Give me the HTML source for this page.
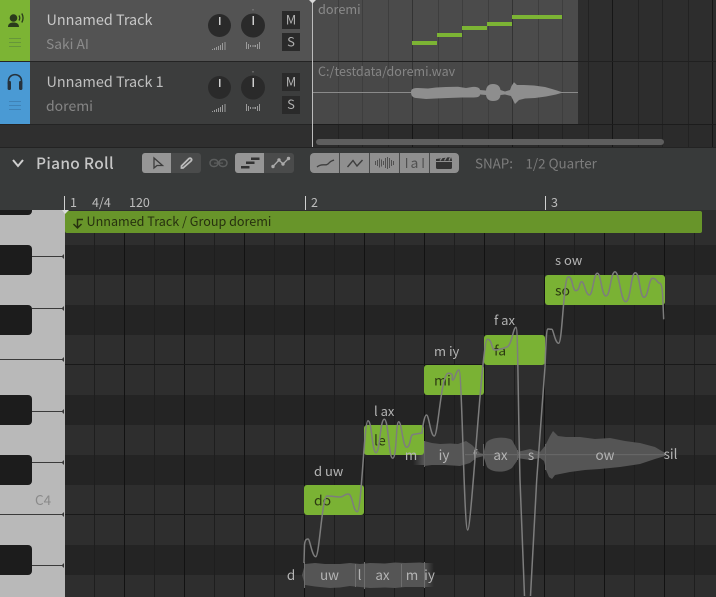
<!DOCTYPE html>
<html><head><meta charset="utf-8"><style>
html,body{margin:0;padding:0;background:#383a3a;width:716px;height:597px;overflow:hidden}
svg{display:block;position:absolute;left:0;top:0}
text{font-family:"Noto Sans CJK SC","Liberation Sans",sans-serif}
</style></head><body>
<svg width="716" height="597" viewBox="0 0 716 597" xmlns="http://www.w3.org/2000/svg">
<defs>
<pattern id="g" x="65" y="0" width="60" height="10" patternUnits="userSpaceOnUse"><rect x="29" width="1" height="10" fill="#1e1e1e"/><rect x="59" width="1" height="10" fill="#121212"/></pattern>
<linearGradient id="fl" x1="0" x2="1" y1="0" y2="0"><stop offset="0" stop-color="#555" stop-opacity="0"/><stop offset="1" stop-color="#555"/></linearGradient>
<linearGradient id="fr" x1="0" x2="1" y1="0" y2="0"><stop offset="0" stop-color="#555"/><stop offset="1" stop-color="#555" stop-opacity="0"/></linearGradient>
</defs>
<!-- panel bg -->
<rect width="716" height="597" fill="#383a3a"/>
<!-- track rows -->
<rect x="0" y="0" width="312" height="61" fill="#535353"/>
<rect x="0" y="62" width="312" height="62" fill="#3c3d3d"/>
<rect x="0" y="125" width="312" height="22" fill="#2f2f2f"/>
<rect x="0" y="61" width="312" height="1" fill="#242424"/>
<rect x="0" y="124" width="312" height="1" fill="#242424"/>
<rect x="0" y="147" width="716" height="1" fill="#232323"/>
<rect x="0" y="0" width="30" height="61" fill="#7cb434"/>
<rect x="0" y="62" width="30" height="62" fill="#4a9ad4"/>
<!-- track icons -->
<g fill="#2a3a1c">
<circle cx="13.5" cy="18" r="3.8"/>
<path d="M8 27 C8 23.5 10.5 22.5 13.5 22.5 C16.5 22.5 19 23.5 19 27 Z"/>
</g>
<path d="M19 15.5 Q20.5 18 19 20.5 M21.8 13.5 Q24.3 18 21.8 22.5" fill="none" stroke="#2a3a1c" stroke-width="1.3"/>
<g fill="#66963a"><rect x="9" y="38" width="12" height="1"/><rect x="9" y="42" width="12" height="1"/><rect x="9" y="46" width="12" height="1"/></g>
<path d="M8.5 84 V81 C8.5 72.5 21.5 72.5 21.5 81 V84" fill="none" stroke="#26323c" stroke-width="1.6"/>
<rect x="7.6" y="81" width="3.4" height="9" rx="1.2" fill="#26323c"/>
<rect x="19" y="81" width="3.4" height="9" rx="1.2" fill="#26323c"/>
<g fill="#3f82b6"><rect x="9" y="101" width="12" height="1"/><rect x="9" y="105" width="12" height="1"/><rect x="9" y="109" width="12" height="1"/></g>
<!-- track labels -->
<text x="46.500" y="25" font-size="14.400" fill="#c8c8c8">Unnamed Track</text>
<text x="46" y="49" font-size="13.800" fill="#8c8c8c">Saki AI</text>
<text x="46.500" y="87" font-size="14.400" fill="#c0c0c0">Unnamed Track 1</text>
<text x="46" y="111" font-size="14" fill="#858585">doremi</text>
<!-- knobs row1 -->
<circle cx="219.500" cy="25.500" r="11.500" fill="#2a2a2a"/><circle cx="253" cy="25.500" r="12" fill="#2a2a2a"/>
<rect x="219" y="17" width="1.500" height="8" fill="#cfcfcf"/><rect x="252.500" y="16" width="1.500" height="9" fill="#cfcfcf"/><rect x="252.500" y="9" width="1" height="1.500" fill="#888"/>
<circle cx="219.500" cy="87.500" r="11.500" fill="#2a2a2a"/><circle cx="253" cy="87.500" r="12" fill="#2a2a2a"/>
<rect x="219" y="79" width="1.500" height="8" fill="#cfcfcf"/><rect x="252.500" y="78" width="1.500" height="9" fill="#cfcfcf"/><rect x="252.500" y="71" width="1" height="1.500" fill="#888"/>
<g fill="#9a9a9a">
<rect x="212" y="49" width="1" height="1"/><rect x="214" y="48" width="1" height="2"/><rect x="216" y="47" width="1" height="3"/><rect x="218" y="46" width="1" height="4"/><rect x="220" y="45" width="1" height="5"/><rect x="222" y="43" width="1" height="7"/><rect x="224.500" y="42" width="1" height="8"/>
<rect x="246" y="42" width="1" height="7"/><rect x="248" y="44" width="1" height="5"/><rect x="250" y="45" width="1" height="2"/><rect x="252" y="45.500" width="3" height="1"/><rect x="255" y="45" width="1" height="2"/><rect x="257" y="44" width="1" height="5"/><rect x="259" y="42" width="1" height="7"/>
<rect x="212" y="111" width="1" height="1"/><rect x="214" y="110" width="1" height="2"/><rect x="216" y="109" width="1" height="3"/><rect x="218" y="108" width="1" height="4"/><rect x="220" y="107" width="1" height="5"/><rect x="222" y="105" width="1" height="7"/><rect x="224.500" y="104" width="1" height="8"/>
<rect x="246" y="104" width="1" height="7"/><rect x="248" y="106" width="1" height="5"/><rect x="250" y="107" width="1" height="2"/><rect x="252" y="107.500" width="3" height="1"/><rect x="255" y="107" width="1" height="2"/><rect x="257" y="106" width="1" height="5"/><rect x="259" y="104" width="1" height="7"/>
</g>
<!-- M S -->
<g fill="#2a2a2a"><rect x="282" y="11" width="18" height="18"/><rect x="282" y="33" width="18" height="18"/><rect x="282" y="73" width="18" height="18"/><rect x="282" y="96" width="18" height="18"/></g>
<g font-size="13" fill="#b0b0b0" text-anchor="middle"><text x="291" y="24.500">M</text><text x="291" y="46.500">S</text><text x="291" y="86.500">M</text><text x="291" y="109">S</text></g>

<!-- arrangement -->
<rect x="313" y="0" width="403" height="147" fill="#2d2d2d"/>
<rect x="313" y="0" width="265" height="61" fill="#4b4b4b"/>
<rect x="313" y="62" width="265" height="62" fill="#484848"/>
<rect x="313" y="125" width="403" height="22" fill="#2b2b2b"/>
<g fill="#3e3e3e"><rect x="338" width="1" height="124"/><rect x="362" width="1" height="124"/><rect x="388" width="1" height="124"/><rect x="438" width="1" height="124"/><rect x="462" width="1" height="124"/><rect x="488" width="1" height="124"/><rect x="538" width="1" height="124"/><rect x="562" width="1" height="124"/></g>
<g fill="#333"><rect x="412" width="1" height="124"/><rect x="512" width="1" height="124"/></g>
<g fill="#222"><rect x="588" width="1" height="147"/><rect x="638" width="1" height="147"/><rect x="662" width="1" height="147"/><rect x="688" width="1" height="147"/><rect x="338" y="125" width="1" height="22"/><rect x="362" y="125" width="1" height="22"/><rect x="388" y="125" width="1" height="22"/><rect x="438" y="125" width="1" height="22"/><rect x="462" y="125" width="1" height="22"/><rect x="488" y="125" width="1" height="22"/><rect x="538" y="125" width="1" height="22"/><rect x="562" y="125" width="1" height="22"/></g>
<g fill="#161616"><rect x="612" width="1" height="147"/><rect x="712" width="1" height="147"/><rect x="412" y="125" width="1" height="22"/><rect x="512" y="125" width="1" height="22"/></g>
<rect x="313" y="61" width="403" height="1" fill="#202020"/>
<rect x="313" y="124" width="403" height="1" fill="#1c1c1c"/>
<g fill="#7cb434"><rect x="412" y="41" width="25" height="4"/><rect x="437" y="33" width="25" height="4"/><rect x="462" y="26" width="25" height="4"/><rect x="487" y="22" width="25" height="4"/><rect x="512" y="15" width="50" height="4"/></g>
<text x="318" y="14" font-size="12.700" fill="#8a8a8a">doremi</text>
<text x="318" y="76" font-size="12.500" fill="#858585">C:/testdata/doremi.wav</text>
<rect x="313" y="92" width="265" height="1" fill="#8a8a8a"/>
<path fill="#8e8e8e" d="M411 92 C411 88.500 414 88 418 88 L428 88.500 L436 87.500 L446 87 L458 86.800 L466 88 L472 87 C477 86.500 480 88 480 90 L486 90.500 C486.500 86 489 84 493 84 C498 84 500 86.500 500.500 90 L505 91.500 L510 90 L511.500 86 L514 82.300 L517 85 L524 85 L534 85.500 L545 87 L552 89 L557 90.500 L563 92.500 L556 94.500 L546 96.500 L535 98 L525 98.500 L519 100 L515 104 L513 100 L511 96 L505 94.500 L500.500 95 C500 99 498 101 493 101 C489 101 486.500 99 486 95 L480 94.500 C480 97 477 97.500 472 97.500 L462 97.500 L448 98 L436 98.500 L426 99 L416 98 C412 97.500 411 95 411 92 Z"/>
<rect x="316" y="139" width="348" height="6" rx="3" fill="#5e5e5e"/>
<rect x="312" y="0" width="1" height="147" fill="#bcbcbc"/>
<path d="M309 0 L316 0 L312.500 3.500 Z" fill="#d8d8d8"/>

<!-- toolbar -->
<path d="M13 160 L18 166 L23 160" fill="none" stroke="#cfcfcf" stroke-width="2"/>
<text x="36" y="169" font-size="15.500" font-weight="500" fill="#c6c6c6" letter-spacing=".3">Piano Roll</text>
<rect x="142" y="153" width="59" height="20" rx="3" fill="#4a4b4b"/>
<path d="M142 156 a3 3 0 0 1 3 -3 H171 V173 H145 a3 3 0 0 1 -3 -3 Z" fill="#969696"/>
<path d="M154 158 L154 168 L157 165.500 L162.500 165.500 Z" fill="none" stroke="#3c3c3c" stroke-width="1.300"/>
<path d="M183 168 L181.500 168 L181.500 166 L189 158.500 C191 157.500 192.500 159.500 191 161 Z" fill="none" stroke="#bbb" stroke-width="1.800"/>
<rect x="210" y="159.500" width="8" height="7" rx="3.500" fill="none" stroke="#5c5e5e" stroke-width="1.500"/><rect x="219" y="159.500" width="8" height="7" rx="3.500" fill="none" stroke="#5c5e5e" stroke-width="1.500"/><rect x="214" y="162.500" width="9" height="1.200" fill="#5c5e5e"/>
<rect x="235" y="153" width="59" height="20" rx="3" fill="#4a4b4b"/>
<path d="M235 156 a3 3 0 0 1 3 -3 H264 V173 H238 a3 3 0 0 1 -3 -3 Z" fill="#969696"/>
<g fill="#333"><rect x="241" y="166" width="8.500" height="2.500"/><rect x="246" y="161.500" width="8.500" height="2.500"/><rect x="251" y="157.500" width="8.500" height="2.500"/></g>
<path d="M273 166.500 L279 160 L283 164 L288.500 158.500" fill="none" stroke="#aaa" stroke-width="1.300"/>
<g fill="#aaa"><circle cx="273" cy="166.500" r="1.700"/><circle cx="279" cy="160" r="1.700"/><circle cx="283" cy="164" r="1.700"/><circle cx="288.500" cy="158.500" r="1.700"/></g>
<rect x="310" y="153" width="149" height="20" rx="4" fill="#8f8f8f"/>
<g fill="#4a4b4b"><rect x="339" y="153" width="1" height="20"/><rect x="369" y="153" width="1" height="20"/><rect x="399" y="153" width="1" height="20"/><rect x="429" y="153" width="1" height="20"/></g>
<path d="M317 167 C322 162.500 326 167 329 163 C331 160.500 332 161 334 160" fill="none" stroke="#3e3e3e" stroke-width="1.400"/>
<path d="M347.500 167 L353 160.500 L357 166 L362.500 160" fill="none" stroke="#3e3e3e" stroke-width="1.400"/>
<g fill="#505050"><rect x="375" y="161" width="1" height="4"/><rect x="377" y="160" width="1" height="6"/><rect x="379" y="158.500" width="1" height="9"/><rect x="381" y="159.500" width="1" height="7"/><rect x="383" y="161" width="1" height="4"/><rect x="385" y="158" width="1" height="10"/><rect x="387" y="157" width="1" height="12"/><rect x="389" y="158" width="1" height="10"/><rect x="391" y="160" width="1" height="6"/><rect x="393" y="161" width="1" height="4"/></g>
<rect x="406" y="158" width="1.200" height="10" fill="#505050"/><rect x="422.500" y="158" width="1.200" height="10" fill="#505050"/>
<text x="414.500" y="168" font-size="14" fill="#505050" text-anchor="middle">a</text>
<path d="M436 162 H452 V167.500 a1.500 1.500 0 0 1 -1.500 1.500 H437.500 a1.500 1.500 0 0 1 -1.500 -1.500 Z" fill="#333"/>
<path d="M436 161 V159 L451 157 L452 160 L452 161 Z" fill="#333"/>
<path d="M440 160.500 L442 157.800 M444.500 160.500 L446.500 157.300 M449 160.500 L450.500 157" stroke="#8f8f8f" stroke-width="1.200"/>
<text x="475" y="168.500" font-size="13.400" fill="#7c7c7c">SNAP:</text>
<text x="525.500" y="168.500" font-size="13.400" fill="#7c7c7c">1/2 Quarter</text>
<!-- ruler -->
<g fill="#d0d0d0"><rect x="64" y="196" width="1" height="14"/><rect x="305" y="196" width="1" height="14"/><rect x="545" y="196" width="1" height="14"/></g>
<g font-size="12.500" fill="#bdbdbd"><text x="70" y="207">1</text><text x="92" y="207">4/4</text><text x="129" y="207">120</text><text x="311" y="207">2</text><text x="551" y="207">3</text></g>

<!-- grid -->
<rect x="65" y="210" width="651" height="387" fill="#2e2e2e"/>
<g fill="#242424">
<rect x="65" y="245" width="651" height="30"/><rect x="65" y="305" width="651" height="30"/><rect x="65" y="395" width="651" height="30"/><rect x="65" y="455" width="651" height="30"/><rect x="65" y="545" width="651" height="30"/>
</g>
<rect x="65" y="233" width="651" height="364" fill="url(#g)"/>
<rect x="65" y="364" width="651" height="1" fill="#191919"/>
<rect x="65" y="514" width="651" height="1" fill="#191919"/>
<rect x="65" y="210" width="651" height="23" fill="#2e2e2e"/>
<rect x="65" y="211" width="637" height="22" rx="2" fill="#68952a"/>
<path d="M73.500 224 L77.500 228 L81.500 224 M77.500 228 V219.500 H83" fill="none" stroke="#27310f" stroke-width="1.500"/>
<text x="86.500" y="226" font-size="12.600" fill="#27310f">Unnamed Track / Group doremi</text>

<!-- piano -->
<rect x="0" y="210" width="65" height="387" fill="#b9b9b9"/>
<path d="M62 210 H69 L65 214 Z" fill="#dcdcdc"/>
<g fill="#1c1c1c">
<path d="M0 210 H32 V211 a4 4 0 0 1 -4 4 H0 Z"/>
<path d="M0 245 H28 a4 4 0 0 1 4 4 V271 a4 4 0 0 1 -4 4 H0 Z"/>
<path d="M0 305 H28 a4 4 0 0 1 4 4 V331 a4 4 0 0 1 -4 4 H0 Z"/>
<path d="M0 395 H28 a4 4 0 0 1 4 4 V421 a4 4 0 0 1 -4 4 H0 Z"/>
<path d="M0 455 H28 a4 4 0 0 1 4 4 V481 a4 4 0 0 1 -4 4 H0 Z"/>
<path d="M0 545 H28 a4 4 0 0 1 4 4 V571 a4 4 0 0 1 -4 4 H0 Z"/>
</g>
<g fill="#3a3a3a"><rect x="32" y="256" width="31" height="1"/><rect x="32" y="308" width="31" height="1"/><rect x="0" y="359" width="63" height="1"/><rect x="32" y="411" width="31" height="1"/><rect x="32" y="462" width="31" height="1"/><rect x="0" y="514" width="63" height="1"/><rect x="32" y="565" width="31" height="1"/></g>
<g fill="#3a3a3a"><path d="M61.500 256.500 L64 254 V259 Z"/><path d="M61.500 308.500 L64 306 V311 Z"/><path d="M61.500 359.500 L64 357 V362 Z"/><path d="M61.500 411.500 L64 409 V414 Z"/><path d="M61.500 462.500 L64 460 V465 Z"/><path d="M61.500 514.500 L64 512 V517 Z"/><path d="M61.500 565.500 L64 563 V568 Z"/></g>
<text x="35" y="505" font-size="13.500" fill="#8a8a8a">C4</text>

<!-- phoneme waveforms -->
<path fill="#555" d="M302 575 L305 564 L315 563 L325 564 L340 564 L350 563 L360 564 L370 563 L385 563.500 L395 562.500 L405 563 L420 562.500 L424 563 V587 L420 587 L405 587 L395 588 L385 587.500 L370 588 L360 587 L350 586 L340 587.500 L330 588 L315 586.500 L305 585 Z"/>
<path fill="url(#fr)" d="M424 563 H434 V587 H424 Z"/>
<g fill="#6e6e6e"><rect x="304" y="562" width="1" height="26"/><rect x="355" y="564" width="1" height="23"/><rect x="364" y="562" width="1" height="27"/><rect x="401" y="564" width="1" height="23"/><rect x="424" y="562" width="1" height="26"/></g>
<path fill="url(#fl)" d="M413 447 H424 V465 H413 Z"/>
<path fill="#555" d="M424 441 L432 443 L440 444 L450 443.500 L458 444 L466 441 L472 445 L480 453 L484 454 L487 456 L484 456 L476 458 L470 463 L460 466 L445 465 L432 465 L424 466 Z"/>
<path fill="#555" d="M465 454 H484 V456 H465 Z"/>
<path fill="#555" d="M483 455 L486 443 C490 437 505 436 512 440 L517 449 V461 L512 468 C505 473 492 473 487 467 Z"/>
<path fill="#555" d="M517 452 L530 449 L540 452 L545 446 L550 436 L553 431 L558 436 L566 437 L580 437 L595 439 L610 438 L625 441 L640 443 L655 447 L665 453 V456 L655 459 L640 464 L620 467 L600 469 L585 470 L570 472 L555 475 L552 479 L549 477 L546 470 L544 461 L540 458 L530 460 L517 458 Z"/>
<rect x="465" y="454" width="200" height="1.200" fill="#666"/>
<g fill="#626262"><rect x="424" y="441" width="1" height="26"/><rect x="483" y="444" width="1" height="22"/><rect x="517" y="450" width="1" height="10"/><rect x="545" y="444" width="1" height="26"/></g>

<!-- notes -->
<g fill="#7ab234">
<rect x="304" y="485" width="60" height="30" rx="3"/>
<rect x="364" y="425" width="60" height="30" rx="3"/>
<rect x="424" y="365" width="60" height="30" rx="3"/>
<rect x="484" y="335" width="61" height="30" rx="3"/>
<rect x="545" y="275" width="120" height="30" rx="3"/>
</g>
<g font-size="14" fill="#2c3a12">
<text x="314" y="505.500">do</text><text x="374" y="445.500">le</text><text x="434" y="385.500">mi</text><text x="494" y="355.500">fa</text><text x="555" y="295.500">so</text>
</g>
<g font-size="13" fill="#b4b4b4">
<text x="314" y="476">d uw</text><text x="374" y="416">l ax</text><text x="434" y="356">m iy</text><text x="494" y="325">f ax</text><text x="555" y="265">s ow</text>
</g>
<g font-size="13.500" fill="#b4b4b4" text-anchor="middle">
<text x="291" y="580">d</text><text x="329.500" y="580">uw</text><text x="359.500" y="580">l</text><text x="382.500" y="580">ax</text><text x="412" y="580">m</text><text x="429.500" y="580">iy</text>
<text x="411" y="460">m</text><text x="444" y="460">iy</text><text x="475" y="460">f</text><text x="500.500" y="460">ax</text><text x="531" y="460">s</text><text x="605" y="460">ow</text><text x="670.500" y="459">sil</text>
</g>
<!-- pitch curve -->
<path fill="none" stroke="#7d7d7d" stroke-width="1.500" d="M304 563 L304.500 545 C305 540 306 539 308 539 S312 556.700 315.700 556.700 S322 496 327 496 S336 497 340 497 S344 494 348.300 494 S353 511.700 357.300 511.700 S364 420.700 368 420.700 S372 452.700 376 452.700 S380 419.300 384.300 419.300 S388.500 458.300 392.700 458.300 S395.700 421.700 398.700 421.700 S402.700 447.300 406.700 447.300 S410 434.500 413 434.500 L422 433 S424 415 426.500 415 S430.500 436 434.300 436 S441 373.300 448.300 373.300 S450.500 380 452.700 380 S456 370 459 370 S464 530 467.700 530 S482 339.300 487.300 339.300 S491 350 495 350 S502 349 507 347 S513 327.300 516 327.300 C518 327.300 518 400 520 480 L524.500 596"/>
<path fill="none" stroke="#7d7d7d" stroke-width="1.500" d="M530.500 596 L536.700 480 L545 366.700 C546 340 546.500 329 548 329 S550 329.300 551.700 329.300 S555 343.300 558.700 343.300 S563.500 276.700 568.300 276.700 S572 290.700 576 290.700 S579 281.700 581.700 281.700 S585.500 295 589.300 295 S593.500 273.300 597.300 273.300 S601.500 296 606 296 S610.500 271.700 615 271.700 S620.500 301.700 625.700 301.700 S630.500 272.700 635.300 272.700 S639.500 297.300 644 297.300 S648.500 278.300 652.700 278.300 S657 283.300 660 283.300 C662 284 662.500 292 662.700 296.700 L663.700 319.300"/>
</svg>
</body></html>
